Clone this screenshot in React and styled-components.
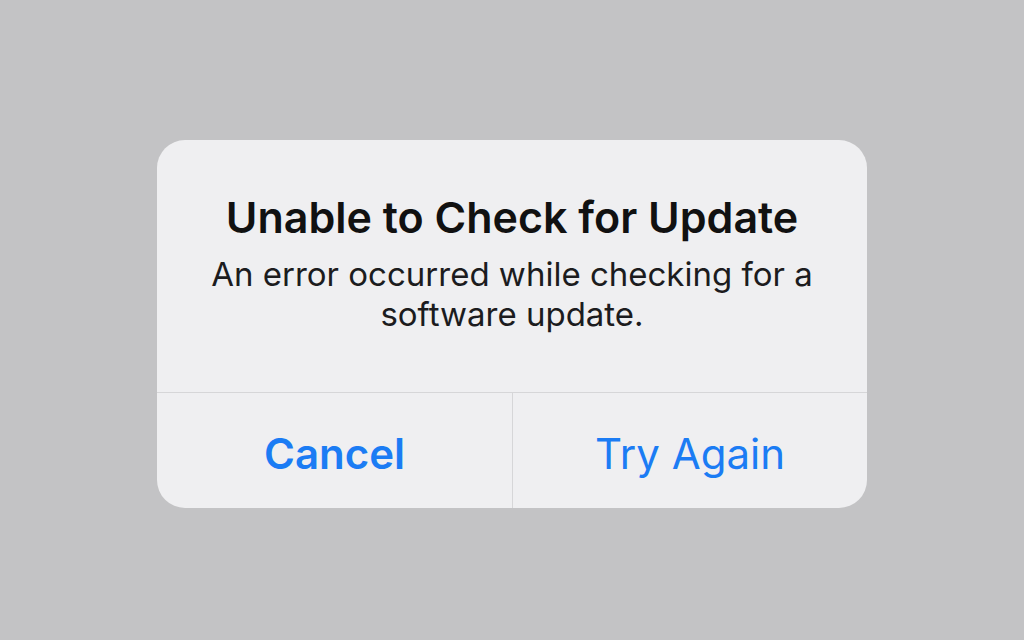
import React from "react";
import styled, { createGlobalStyle } from "styled-components";

const Global = createGlobalStyle`
  html, body {
    margin: 0;
    padding: 0;
    background: #c3c3c5;
    font-family: Inter, "Noto Sans", sans-serif;
  }
`;

const Page = styled.div`
  width: 1024px;
  height: 640px;
  display: flex;
  align-items: flex-start;
  justify-content: center;
  padding-top: 140px;
  box-sizing: border-box;
`;

const Alert = styled.div`
  width: 710px;
  height: 368px;
  background: #efeff1;
  border-radius: 28px;
  display: flex;
  flex-direction: column;
  overflow: hidden;
`;

const Body = styled.div`
  height: 253px;
  box-sizing: border-box;
  padding-top: 53px;
  display: flex;
  flex-direction: column;
  align-items: center;
  text-align: center;
  border-bottom: 1.5px solid #d6d6d8;
`;

const Title = styled.h1`
  margin: 0;
  font-size: 43px;
  font-weight: 600;
  line-height: 48px;
  color: #111;
`;

const Message = styled.p`
  margin: 13px 0 0;
  width: 660px;
  font-size: 33px;
  line-height: 40px;
  color: #1c1c1e;
`;

const Actions = styled.div`
  flex: 1;
  display: grid;
  grid-template-columns: 1fr 1fr;
`;

const Action = styled.button`
  border: none;
  background: transparent;
  font-family: inherit;
  font-size: 42px;
  font-weight: ${(p) => (p.$primary ? 600 : 400)};
  color: #1b7cf4;
  padding: 5px 0 0;
  cursor: pointer;
  & + & {
    border-left: 1.5px solid #d6d6d8;
  }
`;

export default function App() {
  return (
    <>
      <Global />
      <Page>
        <Alert>
          <Body>
            <Title>Unable to Check for Update</Title>
            <Message>
              An error occurred while checking for a software update.
            </Message>
          </Body>
          <Actions>
            <Action $primary>Cancel</Action>
            <Action>Try Again</Action>
          </Actions>
        </Alert>
      </Page>
    </>
  );
}
